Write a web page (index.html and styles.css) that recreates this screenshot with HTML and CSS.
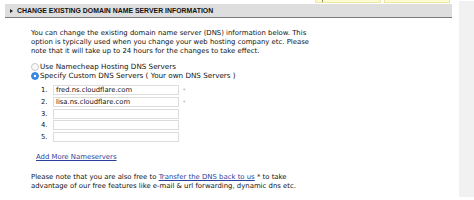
FILE: index.html
```html
<!DOCTYPE html>
<html lang="en">
<head>
    <meta charset="UTF-8">
    <title>Nameservers</title>
    <link rel="stylesheet" href="styles.css">
</head>
<body>
    <div class="page">
        <div class="main">
            <div class="tabs">
                <span class="tab"><i class="mark"></i></span>
                <span class="tab"></span>
            </div>

            <div class="head">
                <span class="arrow"></span>
                <span class="head-title">CHANGE EXISTING DOMAIN NAME SERVER INFORMATION</span>
            </div>

            <div class="content">
                <p class="text">You can change the existing domain name server (DNS) information below. This option is typically used when you change your web hosting company etc. Please note that it will take up to 24 hours for the changes to take effect.</p>

                <div class="choices">
                    <label class="choice"><span class="radio"></span>Use Namecheap Hosting DNS Servers</label>
                    <label class="choice"><span class="radio on"></span>Specify Custom DNS Servers ( Your own DNS Servers )</label>
                </div>

                <ul class="ns">
                    <li class="ns-row"><span class="num">1.</span><span class="field">fred.ns.cloudflare.com</span><span class="req">*</span></li>
                    <li class="ns-row"><span class="num">2.</span><span class="field">lisa.ns.cloudflare.com</span><span class="req">*</span></li>
                    <li class="ns-row"><span class="num">3.</span><span class="field"></span></li>
                    <li class="ns-row"><span class="num">4.</span><span class="field"></span></li>
                    <li class="ns-row"><span class="num">5.</span><span class="field"></span></li>
                </ul>

                <a href="#more" class="more">Add More Nameservers</a>

                <p class="text note">Please note that you are also free to <a href="#back" class="link">Transfer the DNS back to us</a> * to take advantage of our free features like e-mail &amp; url forwarding, dynamic dns etc.</p>
            </div>
        </div>
        <div class="side"></div>
    </div>
</body>
</html>
```

FILE: styles.css
```css
body{
    margin: 0;
    background: #fff;
    font-family: "DejaVu Sans", Verdana, sans-serif;
    color: #111;
}
.page{
    display: flex;
    width: 474px;
    height: 200px;
    overflow: hidden;
}
.main{
    width: 459px;
}
.side{
    width: 15px;
    height: 196px;
    margin-top: 1px;
    background: #f1f1f1;
}

.tabs{
    display: flex;
    gap: 3px;
    height: 3px;
    padding-left: 315px;
}
.tab{
    display: block;
    width: 64px;
    height: 2px;
    background: #fdfbcf;
    border: 1px solid #ece6a8;
    border-top: 0;
    position: relative;
}
.mark{
    position: absolute;
    left: 6px;
    top: 0;
    width: 1px;
    height: 2px;
    background: #8a8a70;
}

.head{
    display: flex;
    align-items: center;
    margin: 1px 0 0 5px;
    width: 447px;
    height: 14px;
    background: #dedede;
    border-bottom: 1px solid #7a7a7a;
    box-sizing: border-box;
}
.arrow{
    width: 0;
    height: 0;
    margin: 0 4px 0 5px;
    border-left: 3px solid #222;
    border-top: 2px solid transparent;
    border-bottom: 2px solid transparent;
}
.head-title{
    font-family: "Liberation Sans", Arial, sans-serif;
    font-weight: bold;
    font-size: 6.9px;
    color: #111;
}

.content{
    padding-left: 31px;
}
.text{
    margin: 0;
    font-size: 6.9px;
    line-height: 9px;
    width: 286px;
}
.content > .text:first-child{
    margin-top: 11px;
}

.choices{
    margin-top: 6px;
}
.choice{
    display: flex;
    align-items: center;
    font-size: 7.2px;
    line-height: 9px;
}
.radio{
    width: 6px;
    height: 6px;
    margin-right: 1px;
    border: 1px solid #c8c8c8;
    border-radius: 50%;
    background: #fafafa;
    box-sizing: content-box;
}
.radio.on{
    border-color: #2f7fdc;
    background: radial-gradient(circle, #fff 0 1.3px, #3a8ae6 1.6px);
}

.ns{
    list-style: none;
    margin: 5px 0 0 0;
    padding: 0;
}
.ns-row{
    display: flex;
    align-items: center;
    height: 10px;
    margin-bottom: 1.75px;
    font-size: 6.8px;
}
.num{
    width: 12px;
    padding-left: 10px;
}
.field{
    display: flex;
    align-items: center;
    width: 126px;
    height: 10px;
    padding-left: 2px;
    border: 1px solid #dcdcdc;
    box-sizing: border-box;
}
.req{
    margin-left: 4px;
    color: #999;
    font-size: 5px;
}

.more{
    display: inline-block;
    margin: 3px 0 0 5px;
    font-size: 6.9px;
    color: #2b3f9c;
}
.note{
    margin-top: 10px;
}
.link{
    color: #2b3f9c;
}
```
